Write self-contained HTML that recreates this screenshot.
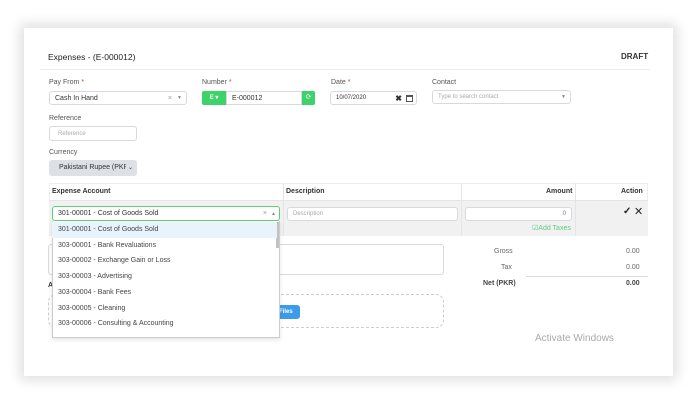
<!DOCTYPE html>
<html><head><meta charset="utf-8"><style>
*{box-sizing:border-box;margin:0;padding:0}
body{width:700px;height:402px;background:#fff;font-family:"Liberation Sans",sans-serif;color:#333;position:relative;overflow:hidden}
.card{position:absolute;left:24px;top:28px;width:649px;height:348px;background:#fff;box-shadow:0 0 12px 4px rgba(0,0,0,.13)}
.a{position:absolute;white-space:nowrap}
.lbl{font-size:7px;color:#555}
.req{color:#e33}
.inp{position:absolute;border:1px solid #d6d9de;border-radius:3px;background:#fff;font-size:7px;color:#333;padding-left:5px;display:flex;align-items:center}
.ph{color:#aaa;font-size:6px}
.th{font-size:7px;font-weight:bold;color:#333}
.it{position:absolute;left:52px;width:225px;height:15.7px;font-size:7px;color:#444;padding-left:6px;line-height:15.7px}
</style></head><body>
<div class="card"></div>
<div class="a" style="left:48px;top:52px;font-size:8.5px;color:#222">Expenses - (E-000012)</div>
<div class="a" style="left:621px;top:52px;font-size:8px;font-weight:bold;color:#333">DRAFT</div>
<div class="a" style="left:40px;top:69px;width:610px;border-top:1px solid #f0f0f0"></div>

<div class="a lbl" style="left:49px;top:79px">Pay From <span class="req">*</span></div>
<div class="inp" style="left:49px;top:91px;width:138px;height:14px">Cash In Hand<span style="position:absolute;right:14px;color:#999">×</span><span style="position:absolute;right:4px;color:#888;font-size:5px">▼</span></div>

<div class="a lbl" style="left:202px;top:79px">Number <span class="req">*</span></div>
<div class="a" style="left:202px;top:91px;width:24px;height:14px;background:#3dd36a;border-radius:2px 0 0 2px;color:#fff;font-size:6px;font-weight:bold;text-align:center;line-height:14px">E ▾</div>
<div class="inp" style="left:226px;top:91px;width:76px;height:14px;border-radius:0">E-000012</div>
<div class="a" style="left:302px;top:91px;width:13px;height:14px;background:#3dd36a;border-radius:0 2px 2px 0;color:#fff;font-size:7px;text-align:center;line-height:14px">⟳</div>

<div class="a lbl" style="left:331px;top:79px">Date <span class="req">*</span></div>
<div class="inp" style="left:330px;top:91px;width:87px;height:14px;font-size:6px">10/07/2020<span style="position:absolute;right:14px;font-weight:bold;font-size:8px">✖</span><span style="position:absolute;right:3px;width:7px;height:7px;border:1px solid #555;border-top-width:2px"></span></div>

<div class="a lbl" style="left:432px;top:79px">Contact</div>
<div class="inp" style="left:432px;top:90px;width:139px;height:14px"><span class="ph">Type to search contact</span><span style="position:absolute;right:4px;color:#888;font-size:5px">▼</span></div>

<div class="a lbl" style="left:49px;top:115px">Reference</div>
<div class="inp" style="left:49px;top:126px;width:88px;height:15px"><span class="ph" style="padding-left:3px">Reference</span></div>

<div class="a lbl" style="left:49px;top:149px">Currency</div>
<div class="a" style="left:49px;top:160px;width:88px;height:16px;background:#dde0e5;border-radius:3px;font-size:7px;color:#333;padding-left:10px;line-height:16px">Pakistani Rupee (PKR)<span style="position:absolute;right:4px;font-size:6px;background:#dde0e5;padding-left:2px">⌄</span></div>

<div class="a" style="left:49px;top:183px;width:599px;height:53px;border:1px solid #eee"></div>
<div class="a" style="left:49px;top:200px;width:599px;height:36px;background:#f1f1f1"></div>
<div class="a" style="left:49px;top:200px;width:599px;border-top:1px solid #e5e5e5"></div>
<div class="a" style="left:283px;top:183px;height:53px;border-left:1px solid #e5e5e5"></div>
<div class="a" style="left:461px;top:183px;height:53px;border-left:1px solid #e5e5e5"></div>
<div class="a" style="left:575px;top:183px;height:53px;border-left:1px solid #e5e5e5"></div>
<div class="a th" style="left:52px;top:188px">Expense Account</div>
<div class="a th" style="left:286px;top:188px">Description</div>
<div class="a th" style="left:546px;top:188px">Amount</div>
<div class="a th" style="left:621px;top:188px">Action</div>
<div class="inp" style="left:287px;top:207px;width:171px;height:14px"><span class="ph">Description</span></div>
<div class="inp" style="left:465px;top:207px;width:107px;height:14px;justify-content:flex-end;padding-right:5px;font-size:6px;color:#777">0</div>
<div class="a" style="left:532px;top:224px;font-size:7px;color:#5ccf7f">☑Add Taxes</div>
<div class="a" style="left:623px;top:206px;font-size:10px;font-weight:bold;color:#222">✓</div>
<div class="a" style="left:634px;top:205px;font-size:11px;color:#222">✕</div>

<div class="a" style="left:48px;top:244px;width:396px;height:31px;border:1px solid #d6d9de;border-radius:3px"></div>
<div class="a" style="left:48px;top:282px;font-size:7px;font-weight:bold">A</div>
<div class="a" style="left:48px;top:294px;width:396px;height:34px;border:1px dashed #ccc;border-radius:8px"></div>
<div class="a" style="left:268px;top:305px;width:32px;height:14px;background:#3d9be9;border-radius:3px;color:#fff;font-size:6px;font-weight:bold;line-height:14px;padding-left:11px">Files</div>

<div class="a" style="left:494px;top:248px;font-size:7px;color:#666">Gross</div>
<div class="a" style="left:501px;top:264px;font-size:7px;color:#666">Tax</div>
<div class="a" style="left:483px;top:280px;font-size:7px;font-weight:bold;color:#444">Net (PKR)</div>
<div class="a" style="left:626px;top:248px;font-size:7px;color:#666">0.00</div>
<div class="a" style="left:626px;top:264px;font-size:7px;color:#666">0.00</div>
<div class="a" style="left:526px;top:276px;width:122px;border-top:1px solid #ddd"></div>
<div class="a" style="left:626px;top:280px;font-size:7px;font-weight:bold;color:#444">0.00</div>
<div class="a" style="left:535px;top:333px;font-size:10px;color:#aaa">Activate Windows</div>

<div class="inp" style="left:52px;top:206px;width:228px;height:15px;border:1px solid #5ccf7f">301-00001 - Cost of Goods Sold<span style="position:absolute;right:12px;color:#999">×</span><span style="position:absolute;right:3px;color:#888;font-size:5px">▲</span></div>
<div class="a" style="left:52px;top:221px;width:228px;height:117px;background:#fff;border:1px solid #ccc;border-top:none;box-shadow:0 2px 4px rgba(0,0,0,.1)"></div>
<div class="a" style="left:276px;top:222px;width:3px;height:26px;background:#c1c1c1"></div>
<div class="it" style="top:222px;background:#e8f3fc">301-00001 - Cost of Goods Sold</div>
<div class="it" style="top:237.7px">303-00001 - Bank Revaluations</div>
<div class="it" style="top:253.4px">303-00002 - Exchange Gain or Loss</div>
<div class="it" style="top:269.1px">303-00003 - Advertising</div>
<div class="it" style="top:284.8px">303-00004 - Bank Fees</div>
<div class="it" style="top:300.5px">303-00005 - Cleaning</div>
<div class="it" style="top:316.2px">303-00006 - Consulting &amp; Accounting</div>
</body></html>
